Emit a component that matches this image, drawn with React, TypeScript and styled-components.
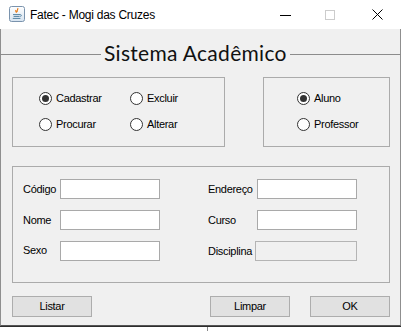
import styled, { createGlobalStyle } from 'styled-components'

const GlobalStyle = createGlobalStyle`
  body {
    margin: 0;
    background: #ffffff;
    overflow: hidden;
  }
  * {
    box-sizing: border-box;
  }
`

const JavaIcon = () => (
  <svg width="16" height="16" viewBox="0 0 16 16">
    <defs>
      <linearGradient id="jbg" x1="0" y1="0" x2="0" y2="1">
        <stop offset="0" stopColor="#ffffff" />
        <stop offset="1" stopColor="#d6e3f0" />
      </linearGradient>
    </defs>
    <rect x="0.5" y="0.5" width="15" height="15" rx="2" fill="url(#jbg)" stroke="#7a93ad" />
    <path d="M8.6 2.2c1.4 1.2-1.6 2-0.2 3.6M7 4.2c-1 1 0.8 1.6 0.2 2.6" stroke="#e76f00" strokeWidth="1.1" fill="none" />
    <path d="M4 8.6h7.2M4.6 10.4h6M3.8 12.4h7.6" stroke="#5382a1" strokeWidth="1" fill="none" />
    <path d="M11.2 8.6c1.6 0 1.6 1.8 0 1.8" stroke="#5382a1" strokeWidth="0.9" fill="none" />
  </svg>
)

const CloseIcon = () => (
  <svg width="11" height="11" viewBox="0 0 11 11">
    <path d="M0.5 0.5L10.5 10.5M10.5 0.5L0.5 10.5" stroke="#000" strokeWidth="1" />
  </svg>
)

export default function App() {
  return (
    <>
      <GlobalStyle />
      <Screen>
        <TitleBar>
          <TitleIcon>
            <JavaIcon />
          </TitleIcon>
          <TitleText>Fatec - Mogi das Cruzes</TitleText>
          <CaptionButtons>
            <CaptionButton>
              <MinimizeGlyph />
            </CaptionButton>
            <CaptionButton>
              <MaximizeGlyph />
            </CaptionButton>
            <CaptionButton>
              <CloseIcon />
            </CaptionButton>
          </CaptionButtons>
        </TitleBar>

        <Body>
          <HeadingRow>
            <HeadingLine $fixed />
            <Heading>Sistema Acadêmico</Heading>
            <HeadingLine />
          </HeadingRow>

          <TopRow>
            <GroupBox $width={213} $padLeft={26}>
              <RadioGrid>
                <RadioItem>
                  <RadioCircle $checked />
                  <RadioLabel>Cadastrar</RadioLabel>
                </RadioItem>
                <RadioItem>
                  <RadioCircle />
                  <RadioLabel>Excluir</RadioLabel>
                </RadioItem>
                <RadioItem>
                  <RadioCircle />
                  <RadioLabel>Procurar</RadioLabel>
                </RadioItem>
                <RadioItem>
                  <RadioCircle />
                  <RadioLabel>Alterar</RadioLabel>
                </RadioItem>
              </RadioGrid>
            </GroupBox>
            <GroupBox $width={127} $padLeft={33}>
              <RadioColumn>
                <RadioItem>
                  <RadioCircle $checked />
                  <RadioLabel>Aluno</RadioLabel>
                </RadioItem>
                <RadioItem>
                  <RadioCircle />
                  <RadioLabel>Professor</RadioLabel>
                </RadioItem>
              </RadioColumn>
            </GroupBox>
          </TopRow>

          <FormBox>
            <FormGrid>
              <FieldLabel>Código</FieldLabel>
              <TextField />
              <span />
              <FieldLabel>Endereço</FieldLabel>
              <TextField />

              <FieldLabel>Nome</FieldLabel>
              <TextField />
              <span />
              <FieldLabel>Curso</FieldLabel>
              <TextField />

              <FieldLabel $raise>Sexo</FieldLabel>
              <TextField />
              <span />
              <FieldLabel>Disciplina</FieldLabel>
              <TextField $disabled />
            </FormGrid>
          </FormBox>

          <ButtonRow>
            <PushButton>Listar</PushButton>
            <RightButtons>
              <PushButton>Limpar</PushButton>
              <PushButton>OK</PushButton>
            </RightButtons>
          </ButtonRow>
        </Body>

        <Backdrop>
          <BackdropDivider />
        </Backdrop>
      </Screen>
    </>
  )
}

const Screen = styled.div`
  width: 401px;
  height: 331px;
  display: flex;
  flex-direction: column;
  overflow: hidden;
`

const TitleBar = styled.div`
  height: 29px;
  flex: none;
  display: flex;
  align-items: center;
  background: #ffffff;
  font-family: 'Liberation Sans', Arial, sans-serif;
`

const TitleIcon = styled.div`
  width: 16px;
  height: 16px;
  margin-left: 9px;
  margin-top: -1px;
  display: flex;
`

const TitleText = styled.div`
  margin-left: 5px;
  font-size: 12px;
  letter-spacing: -0.25px;
  color: #000000;
  flex: 1;
`

const CaptionButtons = styled.div`
  display: flex;
  height: 100%;
`

const CaptionButton = styled.div`
  width: 46px;
  height: 100%;
  display: flex;
  align-items: center;
  justify-content: center;
  padding-right: 1px;
`

const MinimizeGlyph = styled.div`
  width: 11px;
  height: 1px;
  background: #000000;
  margin-top: 1px;
`

const MaximizeGlyph = styled.div`
  width: 10px;
  height: 10px;
  border: 1px solid #cccccc;
  margin-right: 3px;
`

const Body = styled.div`
  height: 297px;
  flex: none;
  display: flex;
  flex-direction: column;
  background: #f0f0f0;
  border-left: 1px solid #8f8f8f;
  border-right: 1px solid #8f8f8f;
  border-bottom: 1px solid #555555;
  font-family: 'Liberation Sans', Tahoma, Arial, sans-serif;
  font-size: 11px;
  letter-spacing: -0.3px;
  color: #000000;
`

const HeadingRow = styled.div`
  margin-top: 10px;
  height: 30px;
  display: flex;
  align-items: center;
  margin-left: -1px;
  margin-right: -1px;
`

const HeadingLine = styled.div<{ $fixed?: boolean }>`
  height: 1px;
  background: #8c8c8c;
  ${(p) => (p.$fixed ? 'width: 101px;' : 'flex: 1;')}
`

const Heading = styled.div`
  margin: -3px 3px 0 3px;
  font-family: 'Lato', 'Open Sans', sans-serif;
  font-size: 21px;
  color: #111111;
  letter-spacing: 0.3px;
  line-height: 30px;
`

const TopRow = styled.div`
  margin-top: 8px;
  padding: 0 10px 0 11px;
  display: flex;
  justify-content: space-between;
`

const GroupBox = styled.div<{ $width: number; $padLeft: number }>`
  width: ${(p) => p.$width}px;
  height: 70px;
  border: 1px solid #ababab;
  padding-left: ${(p) => p.$padLeft}px;
  padding-top: 12px;
`

const RadioGrid = styled.div`
  display: grid;
  grid-template-columns: 91px auto;
  row-gap: 10px;
`

const RadioColumn = styled.div`
  display: flex;
  flex-direction: column;
  gap: 10px;
`

const RadioItem = styled.div`
  display: flex;
  align-items: center;
  height: 16px;
  gap: 4px;
`

const RadioCircle = styled.div<{ $checked?: boolean }>`
  width: 13px;
  height: 13px;
  border-radius: 50%;
  border: 1px solid #333333;
  background: #ffffff;
  display: flex;
  align-items: center;
  justify-content: center;
  flex: none;

  &::after {
    content: '';
    width: 7px;
    height: 7px;
    border-radius: 50%;
    background: ${(p) => (p.$checked ? '#333333' : 'transparent')};
  }
`

const RadioLabel = styled.span`
  line-height: 13px;
`

const FormBox = styled.div`
  margin: 19px 10px 0 11px;
  height: 117px;
  border: 1px solid #ababab;
  padding: 12px 0 0 10px;
`

const FormGrid = styled.div`
  display: grid;
  grid-template-columns: 37px 100px 48px 49px 100px;
  grid-auto-rows: 20px;
  row-gap: 11px;
  align-items: center;
`

const FieldLabel = styled.span<{ $raise?: boolean }>`
  white-space: nowrap;
  ${(p) => (p.$raise ? 'margin-top: -3px;' : '')}
`

const TextField = styled.div<{ $disabled?: boolean }>`
  height: 20px;
  background: ${(p) => (p.$disabled ? '#f0f0f0' : '#ffffff')};
  border: 1px solid ${(p) => (p.$disabled ? '#b4b4b4' : '#a9a9a9')};
  ${(p) => (p.$disabled ? 'margin-left: -2px;' : '')}
`

const ButtonRow = styled.div`
  margin: 13px 10px 0 11px;
  display: flex;
  justify-content: space-between;
`

const RightButtons = styled.div`
  display: flex;
  gap: 20px;
`

const PushButton = styled.div`
  width: 80px;
  height: 21px;
  background: #e1e1e1;
  border: 1px solid #adadad;
  display: flex;
  align-items: center;
  justify-content: center;
  padding-bottom: 1px;
`

const Backdrop = styled.div`
  flex: 1;
  background: #ffffff;
  position: relative;
  border-top: 1px solid #2d2d2d;
`

const BackdropDivider = styled.div`
  position: absolute;
  left: 207px;
  top: 0;
  bottom: 0;
  width: 1px;
  background: #888888;
`
